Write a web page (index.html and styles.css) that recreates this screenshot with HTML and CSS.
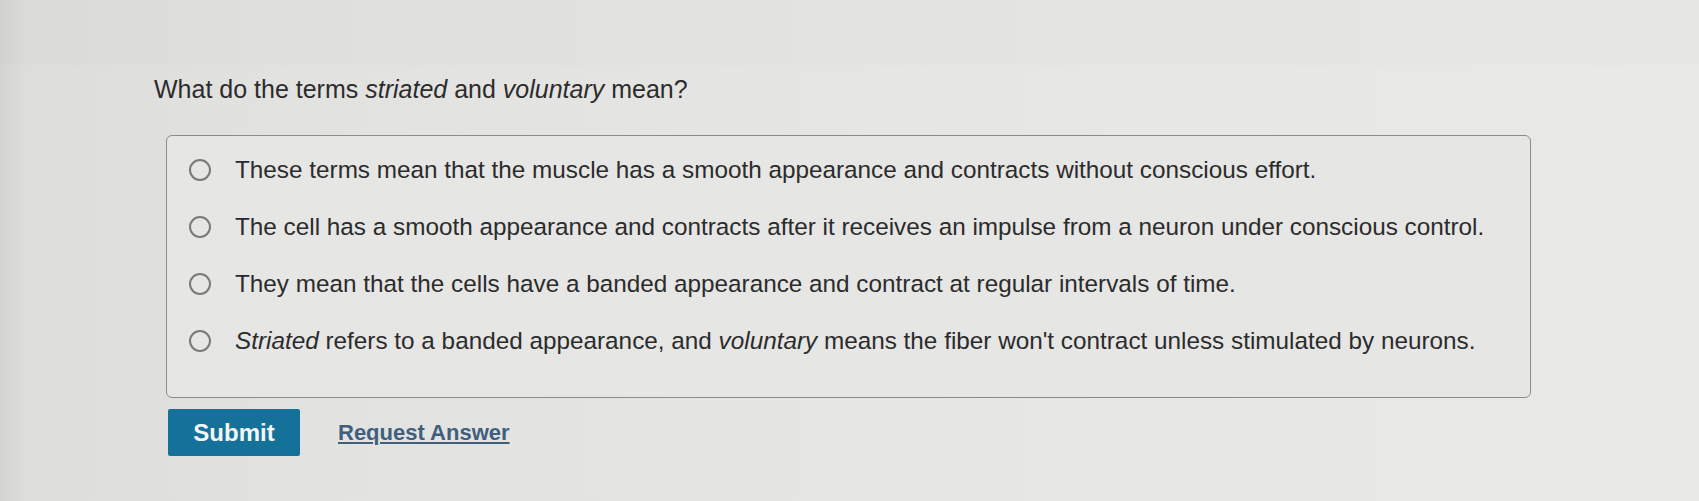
FILE: index.html
```html
<!DOCTYPE html>
<html lang="en">
<head>
    <meta charset="UTF-8">
    <meta name="viewport" content="width=device-width, initial-scale=1.0">
    <title>Question</title>
    <link rel="stylesheet" href="styles.css">
</head>
<body>
    <div class="question">
        <p class="prompt">What do the terms <em>striated</em> and <em>voluntary</em> mean?</p>

        <div class="choices">
            <label class="choice">
                <input type="radio" name="answer">
                <span class="radio"></span>
                <span>These terms mean that the muscle has a smooth appearance and contracts without conscious effort.</span>
            </label>
            <label class="choice">
                <input type="radio" name="answer">
                <span class="radio"></span>
                <span>The cell has a smooth appearance and contracts after it receives an impulse from a neuron under conscious control.</span>
            </label>
            <label class="choice">
                <input type="radio" name="answer">
                <span class="radio"></span>
                <span>They mean that the cells have a banded appearance and contract at regular intervals of time.</span>
            </label>
            <label class="choice">
                <input type="radio" name="answer">
                <span class="radio"></span>
                <span><em>Striated</em> refers to a banded appearance, and <em>voluntary</em> means the fiber won't contract unless stimulated by neurons.</span>
            </label>
        </div>

        <div class="actions">
            <button class="submit-btn">Submit</button>
            <a href="#" class="request-link">Request Answer</a>
        </div>
    </div>
</body>
</html>
```

FILE: styles.css
```css
html, body {
    height: 100%;
}
body {
    margin: 0;
    font-family: "Liberation Sans", Arial, sans-serif;
    color: #2c2c2c;
    background:
        linear-gradient(180deg, rgba(0, 0, 0, 0.01) 0px, rgba(0, 0, 0, 0.01) 64px, rgba(0, 0, 0, 0) 66px),
        linear-gradient(90deg, #d4d4d1 0px, #dddddb 25px, #e2e2e0 300px, #e7e7e5 1100px, #e9e9e7 100%);
    overflow: hidden;
}
.question {
    padding: 0 0 0 154px;
}
.prompt {
    margin: 0;
    padding-top: 74px;
    font-size: 25px;
    line-height: 30px;
}
.prompt em {
    font-style: italic;
}
.choices {
    margin: 31px 0 0 12px;
    width: 1365px;
    box-sizing: border-box;
    padding: 20px 0 42px 22px;
    border: 1.5px solid #8b8b89;
    border-radius: 6px;
    background: #e6e6e4;
    display: flex;
    flex-direction: column;
    gap: 29px;
}
.choice {
    display: flex;
    align-items: center;
    font-size: 24.3px;
    line-height: 28px;
    cursor: pointer;
}
.choice input {
    display: none;
}
.radio {
    width: 18px;
    height: 18px;
    border: 2px solid #7a7a7a;
    border-radius: 50%;
    margin-right: 24px;
    flex-shrink: 0;
}
.actions {
    display: flex;
    align-items: center;
    gap: 38px;
    margin: 11px 0 0 14px;
}
.submit-btn {
    background: #14729a;
    color: #f4f7f8;
    border: none;
    border-radius: 2px;
    font-family: inherit;
    font-size: 24px;
    font-weight: bold;
    width: 132px;
    height: 47px;
    cursor: pointer;
}
.request-link {
    color: #3f5f7d;
    font-size: 22px;
    font-weight: bold;
    text-decoration: underline;
}
```
